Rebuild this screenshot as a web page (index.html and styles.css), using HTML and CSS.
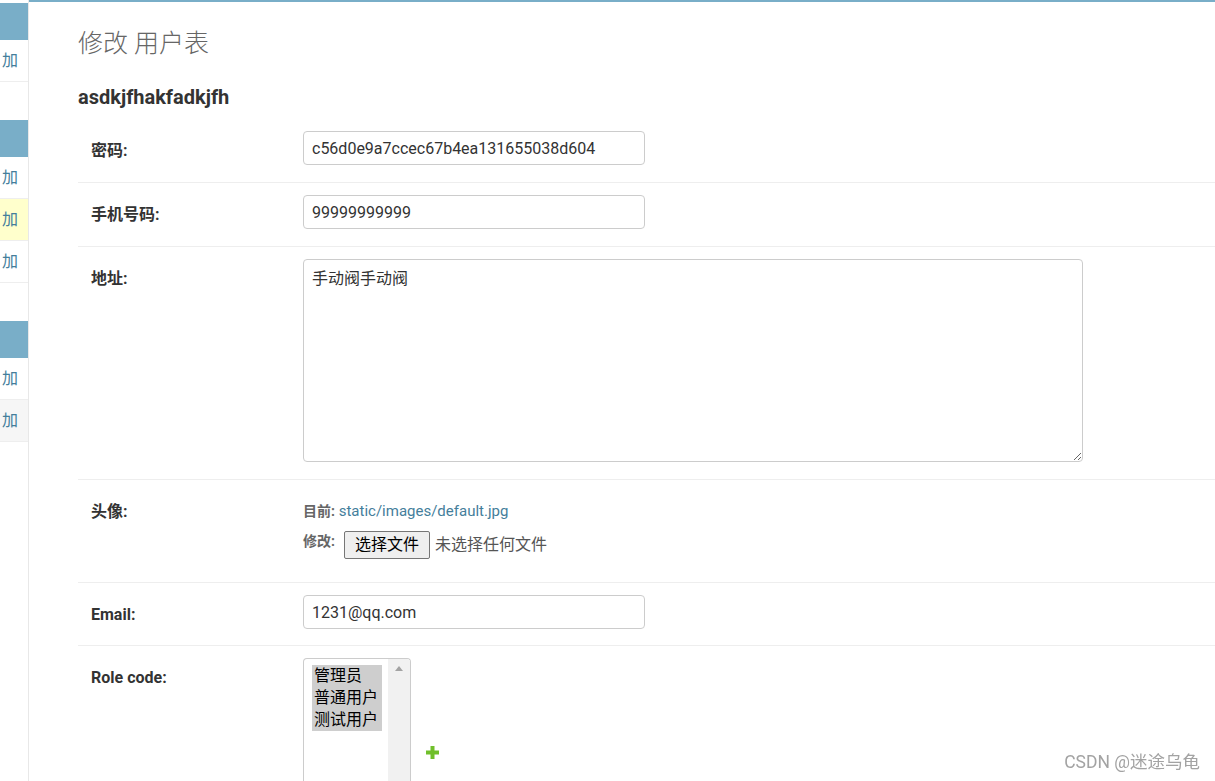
FILE: index.html
```html
<!DOCTYPE html>
<html lang="zh">
<head>
    <meta charset="UTF-8">
    <title>修改 用户表</title>
    <link rel="stylesheet" href="styles.css">
</head>
<body>
    <div class="page">
        <div class="sidebar">
            <div class="module">
                <div class="caption"></div>
                <div class="nav-row">加</div>
            </div>
            <div class="module">
                <div class="caption"></div>
                <div class="nav-row">加</div>
                <div class="nav-row current">加</div>
                <div class="nav-row">加</div>
            </div>
            <div class="module">
                <div class="caption"></div>
                <div class="nav-row">加</div>
                <div class="nav-row alt">加</div>
            </div>
        </div>

        <div class="content">
            <h1>修改 用户表</h1>
            <h2>asdkjfhakfadkjfh</h2>

            <div class="form-row">
                <label>密码:</label>
                <div class="field"><input class="text-input" type="text" value="c56d0e9a7ccec67b4ea131655038d604"></div>
            </div>
            <div class="form-row">
                <label>手机号码:</label>
                <div class="field"><input class="text-input" type="text" value="99999999999"></div>
            </div>
            <div class="form-row">
                <label>地址:</label>
                <div class="field"><textarea class="area">手动阀手动阀</textarea></div>
            </div>
            <div class="form-row">
                <label>头像:</label>
                <div class="field file-field">
                    <div class="file-line"><b>目前:</b> <a href="#">static/images/default.jpg</a></div>
                    <div class="file-line change">
                        <b>修改:</b>
                        <span class="file-btn">选择文件</span>
                        <span class="file-none">未选择任何文件</span>
                    </div>
                </div>
            </div>
            <div class="form-row short">
                <label>Email:</label>
                <div class="field"><input class="text-input" type="text" value="1231@qq.com"></div>
            </div>
            <div class="form-row last">
                <label>Role code:</label>
                <div class="field select-field">
                    <div class="multi-select">
                        <div class="options">
                            <div class="opt">管理员</div>
                            <div class="opt">普通用户</div>
                            <div class="opt">测试用户</div>
                        </div>
                        <div class="scroll"><span class="arrow"></span></div>
                    </div>
                    <svg class="add-icon" width="13" height="13" viewBox="0 0 13 13">
                        <rect x="4.5" y="0" width="4" height="13" fill="#70bf2b"/>
                        <rect x="0" y="4.5" width="13" height="4" fill="#70bf2b"/>
                    </svg>
                </div>
            </div>
        </div>
    </div>
    <div class="watermark">CSDN @迷途乌龟</div>
</body>
</html>
```

FILE: styles.css
```css
* {
    box-sizing: border-box;
}

body {
    margin: 0;
    background: #fff;
    color: #333;
    font-family: Roboto, "Noto Sans CJK SC", sans-serif;
    overflow: hidden;
}

.page {
    display: flex;
    height: 781px;
}

/* left nav, scrolled so only the end of each row shows */
.sidebar {
    width: 29px;
    flex-shrink: 0;
    border-right: 1px solid #e8e8e8;
    padding-top: 3px;
    overflow: hidden;
}

.module {
    margin-bottom: 38px;
}

.caption {
    height: 37px;
    background: #79aec8;
}

.nav-row {
    height: 42px;
    border-bottom: 1px solid #eee;
    color: #447e9b;
    font-size: 16px;
    line-height: 41px;
    padding-left: 2px;
    white-space: nowrap;
}

.nav-row.current {
    background: #ffffcc;
}

.nav-row.alt {
    background: #f6f6f6;
}

.content {
    flex: 1;
    border-top: 2px solid #79aec8;
    padding-left: 49px;
}

h1 {
    margin: 27px 0 0;
    font-size: 25px;
    font-weight: 300;
    line-height: 30px;
    color: #666;
}

h2 {
    margin: 26px 0 10px;
    font-size: 20px;
    font-weight: 700;
    line-height: 24px;
    color: #333;
}

.form-row {
    display: flex;
    padding: 12px 0 17px;
    border-bottom: 1px solid #eee;
}

.form-row.short {
    padding-bottom: 16px;
}

.form-row.last {
    border-bottom: none;
    padding-bottom: 0;
}

.form-row label {
    width: 225px;
    flex-shrink: 0;
    padding-left: 13px;
    margin-top: 10px;
    font-size: 16px;
    font-weight: 700;
    line-height: 20px;
    color: #333;
}

.text-input {
    display: block;
    width: 342px;
    height: 34px;
    border: 1px solid #ccc;
    border-radius: 4px;
    padding: 0 8px;
    font-family: Roboto, "Noto Sans CJK SC", sans-serif;
    font-size: 16px;
    color: #333;
}

.area {
    display: block;
    width: 780px;
    height: 203px;
    border: 1px solid #ccc;
    border-radius: 4px;
    padding: 7px 8px;
    font-family: Roboto, "Noto Sans CJK SC", sans-serif;
    font-size: 16px;
    line-height: 24px;
    color: #333;
    resize: vertical;
}

.file-field {
    padding: 9px 0 6px;
}

.file-line {
    font-size: 15px;
    line-height: 20px;
    color: #666;
}

.file-line b {
    font-size: 14px;
    font-weight: 700;
}

.file-line a {
    color: #447e9b;
    text-decoration: none;
}

.file-line.change {
    display: flex;
    align-items: flex-start;
    margin-top: 10px;
}

.file-btn {
    display: inline-block;
    margin: 0 5px 0 9px;
    padding: 0 10px;
    height: 28px;
    line-height: 26px;
    border: 1px solid #767676;
    border-radius: 2px;
    background: #efefef;
    color: #000;
    font-size: 16px;
}

.file-none {
    font-size: 16px;
    line-height: 28px;
    color: #555;
}

.select-field {
    display: flex;
    align-items: flex-start;
}

.multi-select {
    display: flex;
    width: 108px;
    height: 140px;
    border: 1px solid #ccc;
    border-bottom: none;
    border-radius: 4px 4px 0 0;
    overflow: hidden;
}

.options {
    flex: 1;
    padding: 6px 0 0 8px;
}

.opt {
    background: #cecece;
    color: #000;
    font-size: 16px;
    line-height: 22px;
    width: 70px;
    padding-left: 2px;
}

.scroll {
    width: 22px;
    background: #f1f1f1;
    padding-top: 7px;
    display: flex;
    justify-content: center;
}

.arrow {
    width: 0;
    height: 0;
    border-left: 4px solid transparent;
    border-right: 4px solid transparent;
    border-bottom: 5px solid #a3a3a3;
}

.add-icon {
    margin: 88px 0 0 15px;
}

.watermark {
    position: fixed;
    right: 15px;
    bottom: 8px;
    font-family: Roboto, "Noto Sans CJK SC", sans-serif;
    font-size: 17.5px;
    color: #a3a3a3;
}
```
